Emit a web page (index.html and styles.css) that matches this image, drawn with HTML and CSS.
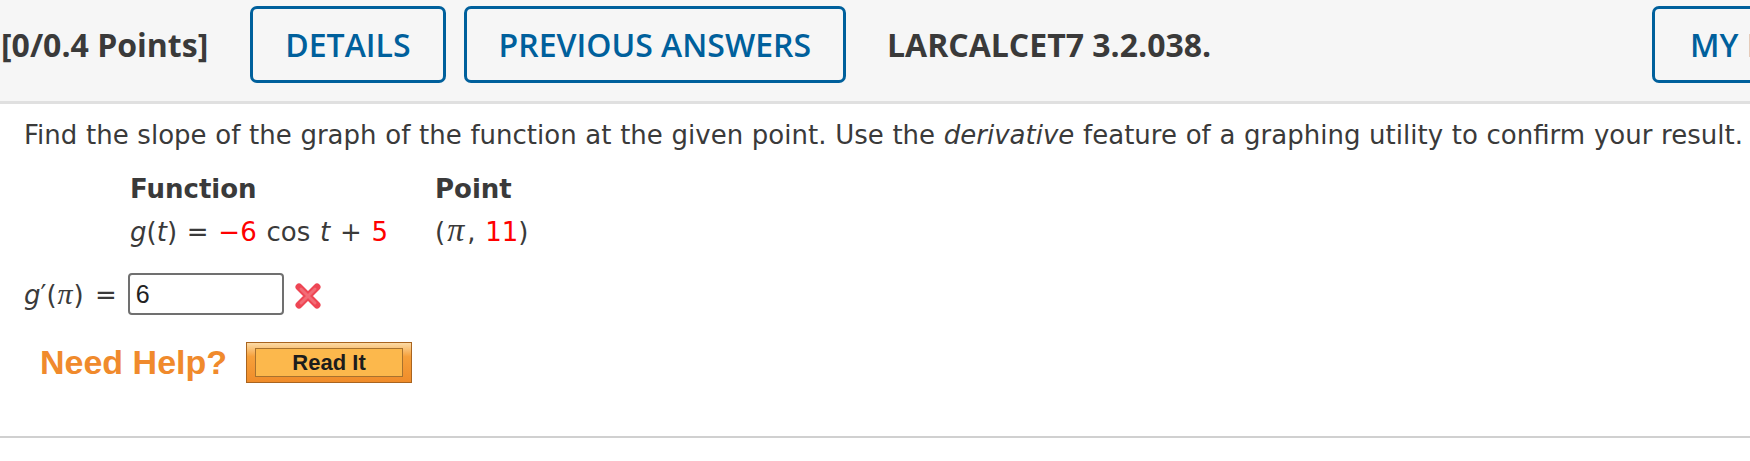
FILE: index.html
```html
<!DOCTYPE html>
<html lang="en">
<head>
  <meta charset="UTF-8" />
  <meta name="viewport" content="width=device-width, initial-scale=1.0"/>
  <title>LARCALCET7 3.2.038</title>
  <link rel="stylesheet" href="styles.css">
</head>
<body>
  <div class="question">
    <div class="qhead">
      <span class="pts">[0/0.4 Points]</span>
      <button class="tab tab-first">DETAILS</button>
      <button class="tab">PREVIOUS ANSWERS</button>
      <span class="qid">LARCALCET7 3.2.038.</span>
      <button class="tab tab-cut">MY NOTES</button>
    </div>

    <div class="qbody">
      <p class="prompt">Find the slope of the graph of the function at the given point. Use the <i>derivative</i> feature of a graphing utility to confirm your result.</p>

      <div class="ftable">
        <div class="th">Function</div>
        <div class="th">Point</div>
        <div class="td"><i>g</i>(<i>t</i>) = <span class="red">&minus;6</span> cos <i>t</i> + <span class="red">5</span></div>
        <div class="td">(<span class="pi">&pi;</span>, <span class="red">11</span>)</div>
      </div>

      <div class="answer-row">
        <span class="alabel"><i>g</i>&prime;(<span class="pi pi-sm">&pi;</span>) =</span>
        <input class="ans" type="text" value="6" />
        <svg class="wrong" width="26" height="26" viewBox="0 0 26 26">
          <path d="M4 4 L22 22 M22 4 L4 22" stroke="#ee4654" stroke-width="7" stroke-linecap="round"/>
          <path d="M6 6 L20 20 M20 6 L6 20" stroke="#f26c76" stroke-width="3" stroke-linecap="round"/>
        </svg>
      </div>

      <div class="help-row">
        <span class="need-help">Need Help?</span>
        <button class="readit"><span>Read It</span></button>
      </div>
    </div>
  </div>
</body>
</html>
```

FILE: styles.css
```css
html, body {
  margin: 0;
  padding: 0;
  background: #fff;
  color: #3a3a3a;
  overflow: hidden;
}
.question {
  border-bottom: 2px solid #d0d0d0;
}
.qhead {
  display: flex;
  align-items: center;
  padding: 6px 0 18px 1px;
  background: #f6f6f6;
  border-bottom: 3px solid #e0e0e0;
  font-family: "Open Sans", sans-serif;
  font-size: 32px;
  overflow: hidden;
}
.pts, .qid {
  font-weight: 700;
  color: #3a3a3a;
  white-space: nowrap;
}
.tab {
  flex: none;
  margin-left: 18px;
  padding: 14px 32px 13px;
  background: transparent;
  border: 3px solid #00609c;
  border-radius: 7px;
  color: #00609c;
  font-family: "Open Sans", sans-serif;
  font-size: 32px;
  font-weight: 600;
  line-height: 44px;
  white-space: nowrap;
}
.tab-first {
  margin-left: 42px;
}
.qid {
  margin-left: 41px;
}
.tab-cut {
  width: 240px;
  margin-left: auto;
  margin-right: -142px;
  padding-left: 35px;
  text-align: left;
}
.qbody {
  padding: 12px 0 53px 24px;
  font-family: "DejaVu Sans", Verdana, sans-serif;
  font-size: 26px;
}
.prompt {
  margin: 0;
  line-height: 39px;
  word-spacing: 0.45px;
  white-space: nowrap;
}
.ftable {
  display: grid;
  grid-template-columns: 305px auto;
  margin: 13px 0 0 106px;
  line-height: 43px;
  word-spacing: 1.5px;
}
.th {
  font-weight: 700;
  word-spacing: 0;
}
.red {
  color: #f00;
}
.pi {
  margin: 0 3px 0 2px;
  font-family: "Liberation Serif", serif;
  font-style: italic;
  font-size: 34px;
  line-height: 1;
}
.pi-sm {
  margin: 0 1px;
  font-size: 30px;
}
.answer-row {
  display: flex;
  align-items: center;
  margin-top: 19px;
  height: 42px;
}
.alabel {
  margin-right: 11px;
  word-spacing: 3px;
  white-space: nowrap;
}
.ans {
  box-sizing: border-box;
  width: 156px;
  height: 42px;
  padding: 0 6px;
  border: 2px solid #707070;
  border-radius: 4px;
  font-family: "Liberation Sans", Arial, sans-serif;
  font-size: 25px;
  color: #222;
}
.wrong {
  margin-left: 11px;
  margin-top: 4px;
}
.help-row {
  display: flex;
  align-items: center;
  margin-top: 27px;
  padding-left: 16px;
}
.need-help {
  font-family: "Liberation Sans", Arial, sans-serif;
  font-weight: 700;
  font-size: 34px;
  color: #f08a2c;
}
.readit {
  margin-left: 19px;
  padding: 5px 8px;
  border: 1px solid #a9641f;
  background: linear-gradient(#fcdba6, #f6a03a 35%, #f08c2a);
  cursor: pointer;
}
.readit span {
  display: block;
  width: 146px;
  border: 1px solid #a8722e;
  background: #fcb84c;
  color: #1c1c1c;
  font-family: "Liberation Sans", Arial, sans-serif;
  font-weight: 700;
  font-size: 22px;
  line-height: 27px;
  text-align: center;
}
```
